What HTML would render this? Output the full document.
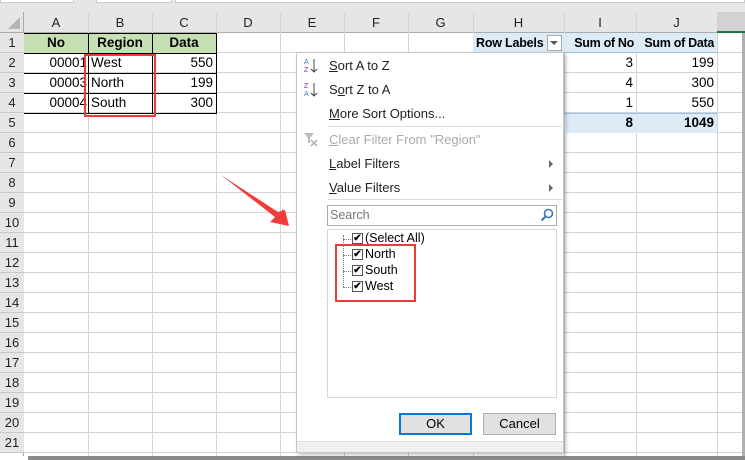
<!DOCTYPE html>
<html><head><meta charset="utf-8"><style>
*{margin:0;padding:0;box-sizing:border-box}
body{width:745px;height:460px;overflow:hidden;position:relative;background:#fff;font-family:"Liberation Sans",sans-serif;font-size:13px;color:#000;white-space:nowrap}
.a{position:absolute}
.grid{left:24px;top:33px;width:718px;height:423px;background:repeating-linear-gradient(to bottom,transparent 0,transparent 19px,#d4d4d4 19px,#d4d4d4 20px)}
.vl{position:absolute;top:13px;width:1px;height:443px;background:#d4d4d4}
.ch{position:absolute;top:12px;height:21px;text-align:center;line-height:21px;font-size:13px;color:#222}
.rh{position:absolute;left:0;width:24px;height:20px;background:#e6e6e6;border-bottom:1px solid #c8c8c8;text-align:center;line-height:20px;font-size:13px;color:#222}
.c{position:absolute;height:20px;line-height:20px;padding:0 3px;font-size:13.5px;white-space:nowrap}
.r{text-align:right}
.b{font-weight:bold}
.mi{position:absolute;left:32px;font-size:13px;color:#222}
.cb{position:absolute;width:11px;height:11px;border:1px solid #555;background:#fff;font-size:10px;line-height:9px;text-align:center;font-weight:bold}
</style></head><body>
<div class="a" style="left:0;top:0;width:745px;height:33px;background:#e6e6e6"></div>
<div class="a" style="left:0;top:0;width:74px;height:3px;background:#fff;border:1px solid #ccc;border-top:none"></div>
<div class="a" style="left:96px;top:0;width:76px;height:3px;background:#fff;border:1px solid #ccc;border-top:none"></div>
<div class="a" style="left:175px;top:0;width:570px;height:3px;background:#fff;border:1px solid #ccc;border-top:none"></div>
<div class="a" style="left:0;top:32px;width:745px;height:1px;background:#ababab"></div>
<div class="a" style="left:23px;top:12px;width:1px;height:444px;background:#ababab"></div>
<svg class="a" style="left:7px;top:16px" width="14" height="14"><polygon points="13,1 13,13 1,13" fill="#b5b5b5"/></svg>
<div class="grid a"></div>
<div class="vl" style="left:88px"></div><div class="vl" style="left:152px"></div><div class="vl" style="left:216px"></div><div class="vl" style="left:280px"></div><div class="vl" style="left:344px"></div><div class="vl" style="left:408px"></div><div class="vl" style="left:473px"></div><div class="vl" style="left:564px"></div><div class="vl" style="left:636px"></div><div class="vl" style="left:717px"></div>
<div class="a" style="left:717px;top:12px;width:28px;height:21px;background:#d2d2d2"></div>
<div class="a" style="left:717px;top:31px;width:28px;height:2px;background:#217346"></div>
<div class="ch" style="left:24px;width:64px">A</div><div class="ch" style="left:88px;width:64px">B</div><div class="ch" style="left:152px;width:64px">C</div><div class="ch" style="left:216px;width:64px">D</div><div class="ch" style="left:280px;width:64px">E</div><div class="ch" style="left:344px;width:64px">F</div><div class="ch" style="left:408px;width:65px">G</div><div class="ch" style="left:473px;width:91px">H</div><div class="ch" style="left:564px;width:72px">I</div><div class="ch" style="left:636px;width:81px">J</div>
<div class="rh" style="top:33px">1</div><div class="rh" style="top:53px">2</div><div class="rh" style="top:73px">3</div><div class="rh" style="top:93px">4</div><div class="rh" style="top:113px">5</div><div class="rh" style="top:133px">6</div><div class="rh" style="top:153px">7</div><div class="rh" style="top:173px">8</div><div class="rh" style="top:193px">9</div><div class="rh" style="top:213px">10</div><div class="rh" style="top:233px">11</div><div class="rh" style="top:253px">12</div><div class="rh" style="top:273px">13</div><div class="rh" style="top:293px">14</div><div class="rh" style="top:313px">15</div><div class="rh" style="top:333px">16</div><div class="rh" style="top:353px">17</div><div class="rh" style="top:373px">18</div><div class="rh" style="top:393px">19</div><div class="rh" style="top:413px">20</div><div class="rh" style="top:433px">21</div>
<!-- data table -->
<div class="a" style="left:24px;top:33px;width:192px;height:20px;background:#c6e0b4"></div>
<div class="a" style="left:24px;top:33px;width:193px;height:81px;border:1px solid #000;border-left:none"></div>
<div class="a" style="left:24px;top:53px;width:192px;height:1px;background:#000"></div>
<div class="a" style="left:24px;top:73px;width:192px;height:1px;background:#000"></div>
<div class="a" style="left:24px;top:93px;width:192px;height:1px;background:#000"></div>
<div class="a" style="left:88px;top:33px;width:1px;height:80px;background:#000"></div>
<div class="a" style="left:152px;top:33px;width:1px;height:80px;background:#000"></div>
<div class="c b" style="left:24px;top:33px;width:64px;text-align:center">No</div>
<div class="c b" style="left:88px;top:33px;width:64px;text-align:center">Region</div>
<div class="c b" style="left:152px;top:33px;width:64px;text-align:center">Data</div>
<div class="c r" style="left:24px;top:53px;width:64px;padding-right:1px">00001</div><div class="c" style="left:88px;top:53px">West</div><div class="c r" style="left:152px;top:53px;width:64px">550</div>
<div class="c r" style="left:24px;top:73px;width:64px;padding-right:1px">00003</div><div class="c" style="left:88px;top:73px">North</div><div class="c r" style="left:152px;top:73px;width:64px">199</div>
<div class="c r" style="left:24px;top:93px;width:64px;padding-right:1px">00004</div><div class="c" style="left:88px;top:93px">South</div><div class="c r" style="left:152px;top:93px;width:64px">300</div>
<div class="a" style="left:84px;top:54px;width:72px;height:63px;border:2px solid #f03a3a"></div>
<!-- pivot -->
<div class="a" style="left:473px;top:33px;width:244px;height:20px;background:#ddebf7;border-bottom:1px solid #9bc2e6"></div>
<div class="a" style="left:473px;top:113px;width:244px;height:20px;background:#ddebf7;border-top:1px solid #9bc2e6"></div>
<div class="c b" style="left:473px;top:33px;font-size:12.5px;letter-spacing:-0.2px">Row Labels</div>
<div class="a" style="left:547px;top:35px;width:15px;height:16px;background:#fff;border:1px solid #aaa"></div>
<svg class="a" style="left:550px;top:41px" width="9" height="5"><polygon points="0,0 8,0 4,4" fill="#555"/></svg>
<div class="c b r" style="left:562px;top:33px;width:74px;padding-right:2px;font-size:12.5px;letter-spacing:-0.3px">Sum of No</div>
<div class="c b r" style="left:636px;top:33px;width:81px;padding-right:3px;font-size:12.5px;letter-spacing:-0.3px">Sum of Data</div>
<div class="c r" style="left:564px;top:53px;width:72px">3</div><div class="c r" style="left:636px;top:53px;width:81px">199</div>
<div class="c r" style="left:564px;top:73px;width:72px">4</div><div class="c r" style="left:636px;top:73px;width:81px">300</div>
<div class="c r" style="left:564px;top:93px;width:72px">1</div><div class="c r" style="left:636px;top:93px;width:81px">550</div>
<div class="c r b" style="left:564px;top:113px;width:72px">8</div><div class="c r b" style="left:636px;top:113px;width:81px">1049</div>
<div class="a" style="left:742px;top:33px;width:3px;height:423px;background:#b0b0b0"></div>
<div class="a" style="left:28px;top:456px;width:717px;height:4px;background:#8a8a8a"></div>
<!-- arrow -->
<svg class="a" style="left:215px;top:170px" width="80" height="60"><polygon points="6,5 64,47 62,53 73,55 68,39 64,45" fill="#f23b3b"/><polygon points="6,5 63,42 70,40 74,56 55,52 60,47" fill="#f23b3b"/></svg>
<!-- popup -->
<div class="a" style="left:296px;top:52px;width:268px;height:401px;background:#fff;border:1px solid #c6c6c6;box-shadow:2px 2px 4px rgba(0,0,0,.25)">
 <svg class="a" style="left:6px;top:4px" width="16" height="18"><text x="1" y="7" font-size="7" fill="#4472c4" font-family="Liberation Sans">A</text><text x="1" y="15" font-size="7" fill="#7030a0" font-family="Liberation Sans">Z</text><path d="M11 2V15M8 12L11 15L14 12" stroke="#444" fill="none"/></svg>
 <div class="mi" style="top:5px"><u>S</u>ort A to Z</div>
 <svg class="a" style="left:6px;top:28px" width="16" height="18"><text x="1" y="7" font-size="7" fill="#7030a0" font-family="Liberation Sans">Z</text><text x="1" y="15" font-size="7" fill="#4472c4" font-family="Liberation Sans">A</text><path d="M11 2V15M8 12L11 15L14 12" stroke="#444" fill="none"/></svg>
 <div class="mi" style="top:29px">S<u>o</u>rt Z to A</div>
 <div class="mi" style="top:53px"><u>M</u>ore Sort Options...</div>
 <div class="a" style="left:31px;top:73px;width:234px;height:1px;background:#ddd"></div>
 <svg class="a" style="left:6px;top:78px" width="16" height="16"><path d="M1 2H11L7 7V12L5 12V7Z" fill="#bbb"/><path d="M8 9L14 15M14 9L8 15" stroke="#aaa" stroke-width="1.3"/></svg>
 <div class="mi" style="top:79px;color:#aaa"><u>C</u>lear Filter From "Region"</div>
 <div class="mi" style="top:103px"><u>L</u>abel Filters</div>
 <svg class="a" style="left:252px;top:107px" width="5" height="8"><polygon points="0,0 4,4 0,8" fill="#666"/></svg>
 <div class="mi" style="top:127px"><u>V</u>alue Filters</div>
 <svg class="a" style="left:252px;top:131px" width="5" height="8"><polygon points="0,0 4,4 0,8" fill="#666"/></svg>
 <div class="a" style="left:31px;top:146px;width:234px;height:1px;background:#ddd"></div>
 <div class="a" style="left:30px;top:152px;width:230px;height:21px;border:1px solid #ababab"></div>
 <div class="a" style="left:33px;top:155px;font-size:12.5px;color:#777">Search</div>
 <svg class="a" style="left:243px;top:155px" width="14" height="14"><circle cx="8.5" cy="5.5" r="4" stroke="#3a74c0" stroke-width="1.6" fill="none"/><path d="M6 8L1.5 12.5" stroke="#3a74c0" stroke-width="2"/></svg>
 <div class="a" style="left:30px;top:176px;width:230px;height:169px;border:1px solid #d8d8d8"></div>
 <div class="a" style="left:46px;top:182px;width:1px;height:52px;border-left:1px dotted #777"></div>
 <div class="a" style="left:46px;top:186px;width:10px;border-top:1px dotted #777"></div>
 <div class="a" style="left:46px;top:202px;width:10px;border-top:1px dotted #777"></div>
 <div class="a" style="left:46px;top:218px;width:10px;border-top:1px dotted #777"></div>
 <div class="a" style="left:46px;top:234px;width:10px;border-top:1px dotted #777"></div>
 <div class="cb" style="left:55px;top:180px">✔</div><div class="a" style="left:68px;top:178px;font-size:12.5px">(Select All)</div>
 <div class="cb" style="left:55px;top:196px">✔</div><div class="a" style="left:68px;top:194px;font-size:12.5px">North</div>
 <div class="cb" style="left:55px;top:212px">✔</div><div class="a" style="left:68px;top:210px;font-size:12.5px">South</div>
 <div class="cb" style="left:55px;top:228px">✔</div><div class="a" style="left:68px;top:226px;font-size:12.5px">West</div>
 <div class="a" style="left:38px;top:191px;width:81px;height:58px;border:2px solid #f03a3a"></div>
 <div class="a" style="left:102px;top:360px;width:73px;height:22px;border:2px solid #0a78d7;background:#e1e1e1;text-align:center;line-height:18px;font-size:13px">OK</div>
 <div class="a" style="left:186px;top:360px;width:73px;height:22px;border:1px solid #adadad;background:#e1e1e1;text-align:center;line-height:20px;font-size:13px">Cancel</div>
 <div class="a" style="left:0;top:388px;width:266px;height:11px;background:#f0f0f0;border-top:1px solid #ddd"></div>
</div>
</body></html>
